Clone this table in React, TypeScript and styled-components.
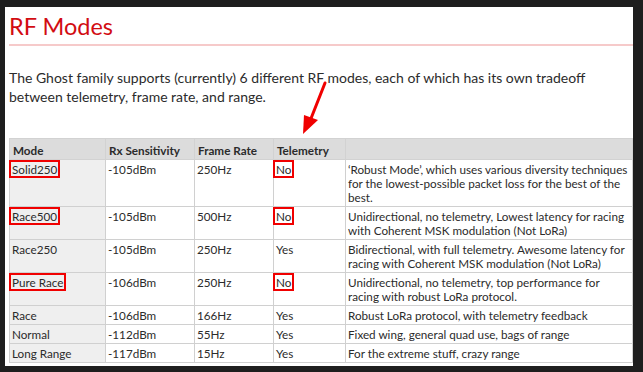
import type { FunctionComponent, ReactNode } from 'react';
import styled, { createGlobalStyle } from 'styled-components';

interface ModeRow {
  mode: string;
  sensitivity: string;
  rate: string;
  telemetry: string;
  notes: string;
  marked?: boolean;
}

const rows: ModeRow[] = [
  {
    mode: 'Solid250',
    sensitivity: '-105dBm',
    rate: '250Hz',
    telemetry: 'No',
    notes: '\u2018Robust Mode\u2019, which uses various diversity techniques for the lowest-possible packet loss for the best of the best.',
    marked: true,
  },
  {
    mode: 'Race500',
    sensitivity: '-105dBm',
    rate: '500Hz',
    telemetry: 'No',
    notes: 'Unidirectional, no telemetry, Lowest latency for racing with Coherent MSK modulation (Not LoRa)',
    marked: true,
  },
  {
    mode: 'Race250',
    sensitivity: '-105dBm',
    rate: '250Hz',
    telemetry: 'Yes',
    notes: 'Bidirectional, with full telemetry. Awesome latency for racing with Coherent MSK modulation (Not LoRa)',
  },
  {
    mode: 'Pure Race',
    sensitivity: '-106dBm',
    rate: '250Hz',
    telemetry: 'No',
    notes: 'Unidirectional, no telemetry, top performance for racing with robust LoRa protocol.',
    marked: true,
  },
  {
    mode: 'Race',
    sensitivity: '-106dBm',
    rate: '166Hz',
    telemetry: 'Yes',
    notes: 'Robust LoRa protocol, with telemetry feedback',
  },
  {
    mode: 'Normal',
    sensitivity: '-112dBm',
    rate: '55Hz',
    telemetry: 'Yes',
    notes: 'Fixed wing, general quad use, bags of range',
  },
  {
    mode: 'Long Range',
    sensitivity: '-117dBm',
    rate: '15Hz',
    telemetry: 'Yes',
    notes: 'For the extreme stuff, crazy range',
  },
];

const Mark: FunctionComponent<{ on?: boolean; children: ReactNode }> = ({ on, children }) =>
  on ? <Boxed>{children}</Boxed> : <>{children}</>;

const App: FunctionComponent = () => (
  <>
    <GlobalStyle />
    <Page>
      <Title>RF Modes</Title>
      <Intro>
        The Ghost family supports (currently) 6 different RF modes, each of which has its own tradeoff
        between telemetry, frame rate, and range.
      </Intro>
      <Table>
        <colgroup>
          <col style={{ width: 96 }} />
          <col style={{ width: 89 }} />
          <col style={{ width: 79 }} />
          <col style={{ width: 72 }} />
          <col />
        </colgroup>
        <thead>
          <tr>
            <Head>Mode</Head>
            <Head>Rx Sensitivity</Head>
            <Head>Frame Rate</Head>
            <Head>Telemetry</Head>
            <Head />
          </tr>
        </thead>
        <tbody>
          {rows.map((row) => (
            <tr key={row.mode}>
              <Cell shaded>
                <Mark on={row.marked}>{row.mode}</Mark>
              </Cell>
              <Cell>{row.sensitivity}</Cell>
              <Cell>{row.rate}</Cell>
              <Cell>
                <Mark on={row.marked}>{row.telemetry}</Mark>
              </Cell>
              <Cell>{row.notes}</Cell>
            </tr>
          ))}
        </tbody>
      </Table>
      <Arrow width="30" height="60" viewBox="0 0 30 60">
        <line x1="24" y1="2" x2="9" y2="40" stroke="#f00000" strokeWidth="3" strokeLinecap="round" />
        <polygon points="2,53 3,34 17,39" fill="#f00000" />
      </Arrow>
    </Page>
  </>
);

const GlobalStyle = createGlobalStyle`
  body {
    margin: 0;
    background: #1e1e1e;
  }
`;

const Page = styled.div`
  position: relative;
  box-sizing: border-box;
  width: 628px;
  height: 359px;
  margin: 7px 0 0 5px;
  padding: 4px 0 0 4px;
  background: #fff;
  font-family: Lato, 'Open Sans', sans-serif;
  color: #2b2b2b;
  overflow: hidden;
`;

const Title = styled.h1`
  margin: 0;
  padding-bottom: 3px;
  border-bottom: 2px solid #f6caca;
  font-family: Lato, sans-serif;
  font-weight: 400;
  font-size: 23.5px;
  line-height: 30px;
  color: #d20c12;
`;

const Intro = styled.p`
  margin: 22px 0 0;
  font-size: 14px;
  line-height: 19px;
`;

const Table = styled.table`
  margin-top: 32px;
  width: 100%;
  border-collapse: collapse;
  table-layout: fixed;
  font-size: 11.7px;
  line-height: 14px;
`;

const Head = styled.th`
  padding: 4px 3px 2px;
  text-align: left;
  font-weight: 700;
  background: #dcdcdc;
  border: 1px solid #d2d2d2;
`;

const Cell = styled.td<{ shaded?: boolean }>`
  padding: 2px 1px 2px 2px;
  vertical-align: top;
  border: 1px solid #d0d0d0;
  background: ${({ shaded }) => (shaded ? '#efefef' : '#fff')};
`;

const Boxed = styled.span`
  display: inline-block;
  margin: -2px -3px;
  padding: 0 1px;
  border: 2px solid #f00000;
`;

const Arrow = styled.svg`
  position: absolute;
  left: 296px;
  top: 74px;
`;

export default App;
